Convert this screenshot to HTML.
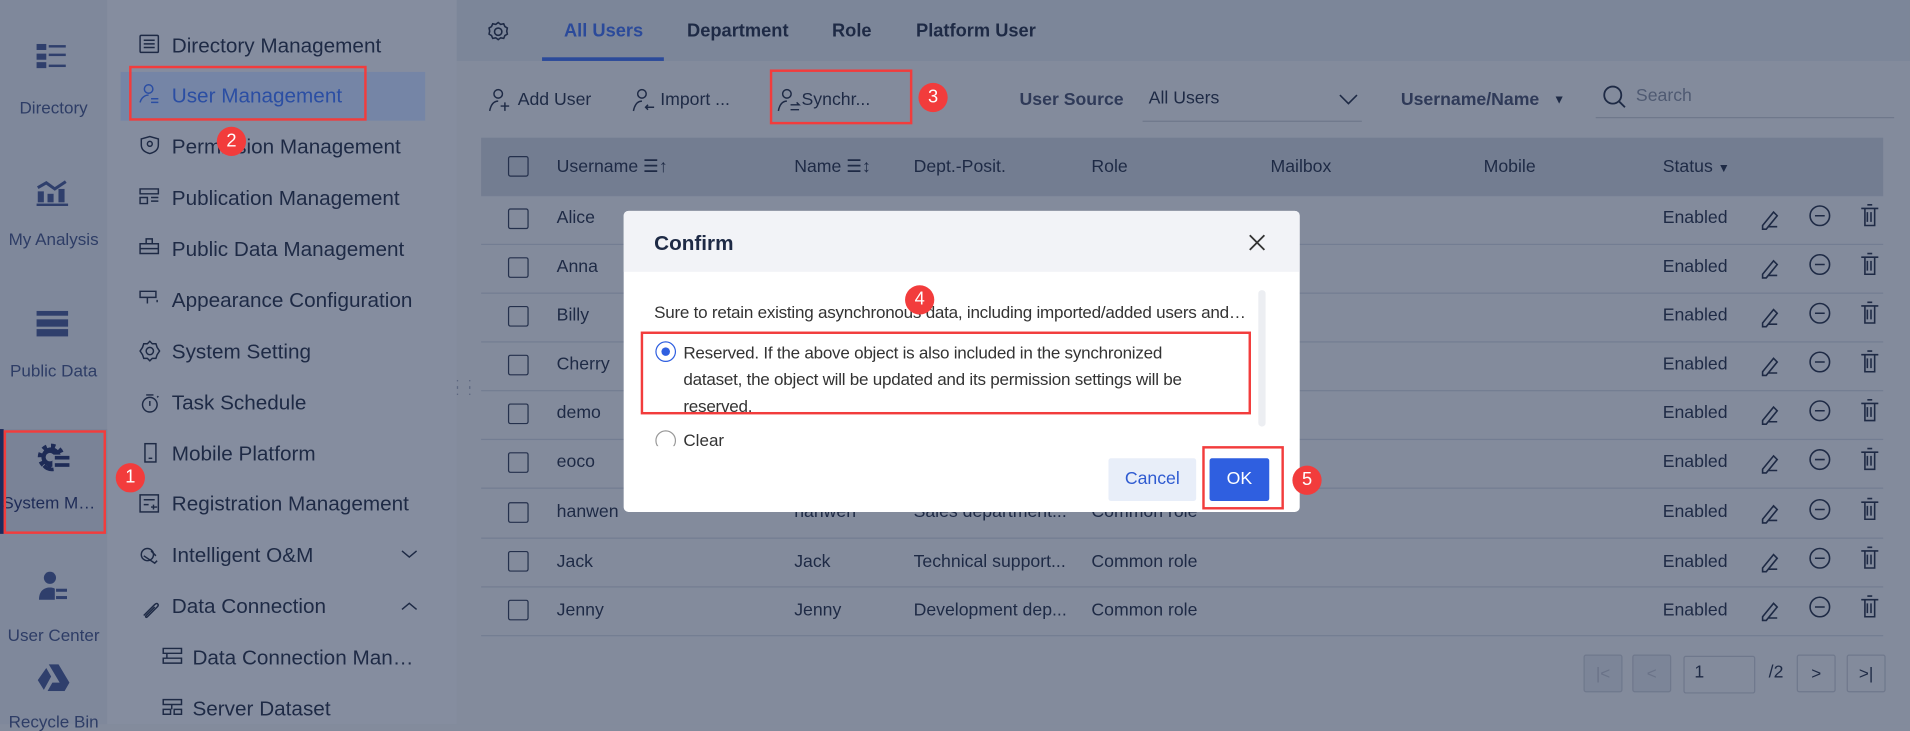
<!DOCTYPE html>
<html><head><meta charset="utf-8">
<style>
*{box-sizing:border-box;margin:0;padding:0}
html,body{width:1910px;height:724px;overflow:hidden;background:#838b9c}
#w{position:absolute;left:0;top:0;width:1568px;height:594px;transform:scale(1.2181,1.2189);transform-origin:0 0;font-family:"Liberation Sans",sans-serif;color:#1e2a45;background:#838b9c}
.a{position:absolute;white-space:nowrap}
.rail{left:0;top:0;width:88px;height:594px;background:#7f889b}
.menu{left:88px;top:0;width:287px;height:594px;background:#858d9f}
.rl{font-size:14px;color:#2e3d66;width:88px;text-align:center;left:0}
.mi{font-size:17px;left:141px;color:#1e2a45}
.top{left:375px;top:0;width:1193px;height:50px;background:#7c8699}
.tab{font-size:15px;font-weight:bold;top:17px}
.badge{width:24px;height:24px;border-radius:12px;background:#f23c3c;color:#fff;font-size:15px;text-align:center;line-height:24px}
.red{border:2px solid #f23c3c}
.cb{width:17px;height:17px;border:1.3px solid #24304c;border-radius:2px;left:417px}
.t{font-size:14.5px}
.line{left:395px;width:1151px;height:1px;background:#737d92}
.st{left:1365px;font-size:14.5px}
.pg{width:32px;height:31px;border:1px solid #6f788c;border-radius:2px}
</style></head><body><div id="w">
<div class="a rail"></div>
<div class="a menu"></div>
<div class="a" style="left:0;top:352px;width:88px;height:86px;background:#7a8397"></div>
<div class="a" style="left:0;top:352px;width:3px;height:86px;background:#1d2b5c"></div>
<svg class="a" style="left:30px;top:36px" width="26" height="20" viewBox="0 0 26 20" fill="#2f3f6c"><rect x="0" y="0" width="8" height="5"/><rect x="10" y="1" width="14" height="2"/><rect x="0" y="8" width="8" height="5"/><rect x="10" y="8" width="14" height="2"/><rect x="0" y="15" width="8" height="5"/><rect x="10" y="17" width="14" height="2"/></svg>
<div class="a rl" style="top:80px">Directory</div>
<svg class="a" style="left:30px;top:146px" width="26" height="24" viewBox="0 0 26 24" fill="#2f3f6c"><path d="M1 8l7-4 7 5 9-6" stroke="#2f3f6c" stroke-width="2.5" fill="none"/><rect x="1" y="11" width="5" height="9"/><rect x="9" y="13" width="5" height="7"/><rect x="18" y="9" width="5" height="11"/><rect x="0" y="21" width="26" height="2"/></svg>
<div class="a rl" style="top:188px">My Analysis</div>
<svg class="a" style="left:30px;top:255px" width="26" height="22" viewBox="0 0 26 22" fill="#2f3f6c"><rect x="0" y="0" width="26" height="4"/><rect x="0" y="7" width="26" height="6"/><rect x="0" y="15" width="26" height="6"/></svg>
<div class="a rl" style="top:296px">Public Data</div>
<svg class="a" style="left:30px;top:362px" width="28" height="26" viewBox="0 0 28 26"><circle cx="12" cy="13" r="9" fill="none" stroke="#1e2b56" stroke-width="4" stroke-dasharray="3.5 3.5"/><circle cx="12" cy="13" r="8" fill="#1e2b56"/><circle cx="11" cy="13" r="3.5" fill="#7a8397"/><rect x="13" y="11" width="15" height="13" fill="#7a8397"/><rect x="15" y="12" width="12" height="3" fill="#1e2b56"/><rect x="15" y="18" width="12" height="3" fill="#1e2b56"/><path d="M6 20a9 9 0 0 0 8 3" stroke="#1e2b56" stroke-width="3" fill="none"/></svg>
<div class="a rl" style="top:404px;color:#1e2b56;width:86px;overflow:hidden;text-overflow:ellipsis;padding:0 2px">System Ma…</div>
<svg class="a" style="left:32px;top:469px" width="24" height="24" viewBox="0 0 24 24" fill="#2f3f6c"><circle cx="9" cy="5" r="5"/><path d="M0 23c0-7 4-10 9-10 3 0 4 1 4 1v9z"/><rect x="14" y="14" width="9" height="2.5"/><rect x="14" y="20" width="9" height="2.5"/></svg>
<div class="a rl" style="top:513px">User Center</div>
<svg class="a" style="left:30px;top:545px" width="28" height="22" viewBox="0 0 28 22" fill="#2f3f6c"><path d="M10 0h8l9 15h-8zM8 3l4 7-6 11-5-8zM9 22l4-7h14l-4 7z"/></svg>
<div class="a rl" style="top:584px">Recycle Bin</div>
<div class="a" style="left:99px;top:59px;width:250px;height:40px;background:#7585a6"></div>
<div class="a mi" style="top:28px">Directory Management</div>
<div class="a mi" style="top:69px;color:#2b4ea3">User Management</div>
<div class="a mi" style="top:111px">Permission Management</div>
<div class="a mi" style="top:153px">Publication Management</div>
<div class="a mi" style="top:195px">Public Data Management</div>
<div class="a mi" style="top:237px">Appearance Configuration</div>
<div class="a mi" style="top:279px">System Setting</div>
<div class="a mi" style="top:321px">Task Schedule</div>
<div class="a mi" style="top:363px">Mobile Platform</div>
<div class="a mi" style="top:404px">Registration Management</div>
<div class="a mi" style="top:446px">Intelligent O&amp;M</div>
<div class="a mi" style="top:488px">Data Connection</div>
<div class="a mi" style="top:530px;left:158px;width:188px;overflow:hidden;text-overflow:ellipsis">Data Connection Management</div>
<div class="a mi" style="top:572px;left:158px">Server Dataset</div>
<svg class="a" style="left:0;top:0" width="375" height="594" fill="none" stroke="#1e2a45" stroke-width="1.2">
<rect x="115" y="29" width="15" height="14" rx="1"/><path d="M118 33h9M118 36h9M118 39h9"/>
<circle cx="122" cy="73" r="3.5" stroke="#2b4ea3"/><path d="M115 84c1-4 4-6 7-6M124 81h6M124 84h6" stroke="#2b4ea3"/>
<path d="M116 114l7-2 7 2v5c0 4-3 6-7 7-4-1-7-3-7-7z"/><circle cx="123" cy="118" r="2"/>
<path d="M115 155h15v4h-15zM115 162h6v5h-6zM124 162h6M124 165h6"/>
<path d="M115 200h15v8h-15zM120 200v-4h5v4M115 204h15"/>
<path d="M115 239h13v5h-13zM121 244v5M129 246v2"/>
<circle cx="123" cy="288" r="3"/><path d="M123 280l2 2h3l1 3 2 3-2 3-1 3h-3l-2 2-2-2h-3l-1-3-2-3 2-3 1-3h3z"/>
<circle cx="123" cy="332" r="6"/><path d="M123 329v4M120 324h6M129 326l1-1"/>
<rect x="119" y="364" width="9" height="15"/><path d="M122 376h3"/>
<rect x="115" y="406" width="15" height="14"/><path d="M118 410h9M118 414h4M124 416h5M126 414v4"/>
<circle cx="121" cy="455" r="5"/><path d="M118 456l9 6 2-2M124 452l4 4"/>
<path d="M118 505l9-9c2-2 4 0 2 2l-8 8c-1 1-2 0-1-1l7-7"/>
<path d="M330 452l6 5 6-5M330 500l6-5 6 5"/>
<path d="M134 532h15v4h-15zM134 540h15v4h-15zM137 536v4"/>
<path d="M134 574h15v4h-15zM134 582h6v4h-6zM143 582h6v4h-6zM141 578v4"/>
</svg>
<div class="a" style="left:374px;top:312px;color:#5d6780;font-size:11px;line-height:6px;letter-spacing:2px">: :<br>: :</div>
<div class="a top"></div>
<svg class="a" style="left:400px;top:17px" width="18" height="18" viewBox="0 0 18 18" fill="none" stroke="#1e2a45" stroke-width="1.3"><circle cx="9" cy="9" r="3"/><path d="M9 1.5l2 1.5 2.5-.5 1 2.3 2 1.2-.5 2.5.5 2.5-2 1.2-1 2.3-2.5-.5-2 1.5-2-1.5-2.5.5-1-2.3-2-1.2.5-2.5-.5-2.5 2-1.2 1-2.3 2.5.5z"/></svg>
<div class="a tab" style="left:463px;color:#2b4a9a">All Users</div>
<div class="a" style="left:445px;top:47px;width:100px;height:3px;background:#2b4a9a"></div>
<div class="a tab" style="left:564px">Department</div>
<div class="a tab" style="left:683px">Role</div>
<div class="a tab" style="left:752px">Platform User</div>
<svg class="a" style="left:400px;top:72px" width="360" height="22" fill="none" stroke="#1e2a45" stroke-width="1.2"><circle cx="9" cy="5" r="3.5"/><path d="M2 19c1-5 3-8 7-8M11 15h7M14.5 12v7"/><circle cx="127" cy="5" r="3.5"/><path d="M120 19c1-5 3-8 7-8M130 16h7M132 14l-2 2 2 2"/><circle cx="246" cy="5" r="3.5"/><path d="M239 19c1-5 3-8 7-8M249 14h7l-2-2M249 18h7"/></svg>
<div class="a t" style="left:425px;top:74px">Add User</div>
<div class="a t" style="left:542px;top:74px">Import ...</div>
<div class="a t" style="left:658px;top:74px">Synchr...</div>
<div class="a t" style="left:837px;top:74px;font-weight:bold;color:#2f3a58">User Source</div>
<div class="a t" style="left:943px;top:73px">All Users</div>
<svg class="a" style="left:1099px;top:76px" width="16" height="10" fill="none" stroke="#1e2a45" stroke-width="1.3"><path d="M1 2l7 7 7-7"/></svg>
<div class="a" style="left:938px;top:99px;width:180px;height:1px;background:#6f788b"></div>
<div class="a t" style="left:1150px;top:74px;font-weight:bold;color:#2f3a58">Username/Name</div>
<div class="a" style="left:1275px;top:77px;font-size:10px">▼</div>
<svg class="a" style="left:1315px;top:69px" width="20" height="20" fill="none" stroke="#1e2a45" stroke-width="1.5"><circle cx="9" cy="9" r="7"/><path d="M14 14l5 5"/></svg>
<div class="a t" style="left:1343px;top:71px;color:#4f5a72">Search</div>
<div class="a" style="left:1310px;top:96px;width:245px;height:1px;background:#6f788b"></div>
<div class="a" style="left:395px;top:113px;width:1151px;height:47px;background:#737d91"></div>
<div class="a cb" style="top:128px"></div>
<div class="a t" style="left:457px;top:129px">Username ☰↑</div>
<div class="a t" style="left:652px;top:129px">Name ☰↕</div>
<div class="a t" style="left:750px;top:129px">Dept.-Posit.</div>
<div class="a t" style="left:896px;top:129px">Role</div>
<div class="a t" style="left:1043px;top:129px">Mailbox</div>
<div class="a t" style="left:1218px;top:129px">Mobile</div>
<div class="a t" style="left:1365px;top:129px">Status <span style="font-size:10px">▼</span></div>
<div class="a line" style="top:160px"></div>
<div class="a line" style="top:200px"></div><div class="a line" style="top:240px"></div><div class="a line" style="top:280px"></div><div class="a line" style="top:320px"></div><div class="a line" style="top:360px"></div><div class="a line" style="top:400px"></div><div class="a line" style="top:441px"></div><div class="a line" style="top:481px"></div><div class="a line" style="top:521px"></div>
<div class="a cb" style="top:171px"></div><div class="a t" style="left:457px;top:171px">Alice</div>
<div class="a cb" style="top:211px"></div><div class="a t" style="left:457px;top:211px">Anna</div>
<div class="a cb" style="top:251px"></div><div class="a t" style="left:457px;top:251px">Billy</div>
<div class="a cb" style="top:291px"></div><div class="a t" style="left:457px;top:291px">Cherry</div>
<div class="a cb" style="top:331px"></div><div class="a t" style="left:457px;top:331px">demo</div>
<div class="a cb" style="top:371px"></div><div class="a t" style="left:457px;top:371px">eoco</div>
<div class="a cb" style="top:412px"></div><div class="a t" style="left:457px;top:412px">hanwen</div><div class="a t" style="left:652px;top:412px">hanwen</div><div class="a t" style="left:750px;top:412px">Sales department...</div><div class="a t" style="left:896px;top:412px">Common role</div>
<div class="a cb" style="top:452px"></div><div class="a t" style="left:457px;top:453px">Jack</div><div class="a t" style="left:652px;top:453px">Jack</div><div class="a t" style="left:750px;top:453px">Technical support...</div><div class="a t" style="left:896px;top:453px">Common role</div>
<div class="a cb" style="top:492px"></div><div class="a t" style="left:457px;top:493px">Jenny</div><div class="a t" style="left:652px;top:493px">Jenny</div><div class="a t" style="left:750px;top:493px">Development dep...</div><div class="a t" style="left:896px;top:493px">Common role</div>
<div class="a st" style="top:171px">Enabled</div><div class="a st" style="top:211px">Enabled</div><div class="a st" style="top:251px">Enabled</div><div class="a st" style="top:291px">Enabled</div><div class="a st" style="top:331px">Enabled</div><div class="a st" style="top:371px">Enabled</div><div class="a st" style="top:412px">Enabled</div><div class="a st" style="top:453px">Enabled</div><div class="a st" style="top:493px">Enabled</div>
<svg class="a" style="left:1440px;top:160px" width="106" height="361" fill="none" stroke="#1e2a45" stroke-width="1.3">
<defs><g id="r"><path d="M7 27l9-11 3 3-9 11H7zM12 28h7"/><circle cx="54" cy="19" r="8"/><path d="M50 19h8"/><path d="M88 13h14M91 13v14h8V13M93 10h4M93 16v8M96 16v8"/></g></defs>
<use href="#r" y="-2"/><use href="#r" y="38"/><use href="#r" y="78"/><use href="#r" y="118"/><use href="#r" y="158"/><use href="#r" y="198"/><use href="#r" y="239"/><use href="#r" y="279"/><use href="#r" y="319"/>
</svg>
<div class="a pg" style="left:1300px;top:537px;background:#7c8598;color:#6a7388;font-size:14px;text-align:center;line-height:29px">|&lt;</div>
<div class="a pg" style="left:1340px;top:537px;background:#7c8598;color:#6a7388;font-size:14px;text-align:center;line-height:29px">&lt;</div>
<div class="a pg" style="left:1382px;top:538px;width:59px;padding-left:8px;font-size:14.5px;line-height:27px">1</div>
<div class="a t" style="left:1452px;top:544px">/2</div>
<div class="a pg" style="left:1475px;top:537px;font-size:14px;text-align:center;line-height:29px">&gt;</div>
<div class="a pg" style="left:1516px;top:537px;font-size:14px;text-align:center;line-height:29px">&gt;|</div>
<div class="a" style="left:512px;top:173px;width:555px;height:247px;background:#fff;border-radius:4px;overflow:hidden">
<div class="a" style="left:0;top:0;width:555px;height:50px;background:#f2f3f7"></div>
<div class="a" style="left:25px;top:17px;font-size:17px;font-weight:bold;color:#1e2a45">Confirm</div>
<svg class="a" style="left:513px;top:19px" width="14" height="14" stroke="#333" stroke-width="1.5"><path d="M1 1l12 12M13 1L1 13"/></svg>
<div class="a" style="left:521px;top:65px;width:6px;height:112px;background:#eceef2;border-radius:3px"></div>
<div class="a" style="left:25px;top:75px;font-size:14px;color:#333;width:488px;overflow:hidden;text-overflow:ellipsis;letter-spacing:-0.2px">Sure to retain existing asynchronous data, including imported/added users and departments</div>
<div class="a" style="left:0;top:100px;width:555px;height:93px;overflow:hidden">
<div class="a" style="left:26px;top:7px;width:17px;height:17px;border:1.5px solid #2f5fe0;border-radius:50%"><div style="margin:3.5px;width:7px;height:7px;border-radius:50%;background:#2f5fe0"></div></div>
<div class="a" style="left:49px;top:5px;font-size:14px;color:#333;line-height:22px;white-space:normal;width:440px;letter-spacing:-0.2px">Reserved. If the above object is also included in the synchronized dataset, the object will be updated and its permission settings will be reserved.</div>
<div class="a" style="left:26px;top:80px;width:17px;height:17px;border:1.3px solid #999;border-radius:50%"></div>
<div class="a" style="left:49px;top:80px;font-size:14px;color:#333">Clear</div>
</div>
<div class="a" style="left:398px;top:203px;width:72px;height:35px;background:#e8eef9;border-radius:2px;color:#2f5bd1;font-size:14.5px;text-align:center;line-height:35px">Cancel</div>
<div class="a" style="left:481px;top:203px;width:49px;height:35px;background:#2f5fe0;border-radius:2px;color:#fff;font-size:14.5px;text-align:center;line-height:35px">OK</div>
</div>
<div class="a red" style="left:3px;top:353px;width:84px;height:85px"></div>
<div class="a red" style="left:106px;top:54px;width:195px;height:45px"></div>
<div class="a red" style="left:632px;top:57px;width:117px;height:45px"></div>
<div class="a red" style="left:526px;top:272px;width:501px;height:68px"></div>
<div class="a red" style="left:987px;top:366px;width:67px;height:52px"></div>
<div class="a badge" style="left:95px;top:380px">1</div>
<div class="a badge" style="left:178px;top:104px">2</div>
<div class="a badge" style="left:754px;top:68px">3</div>
<div class="a badge" style="left:743px;top:234px">4</div>
<div class="a badge" style="left:1061px;top:382px">5</div>
</div></body></html>
